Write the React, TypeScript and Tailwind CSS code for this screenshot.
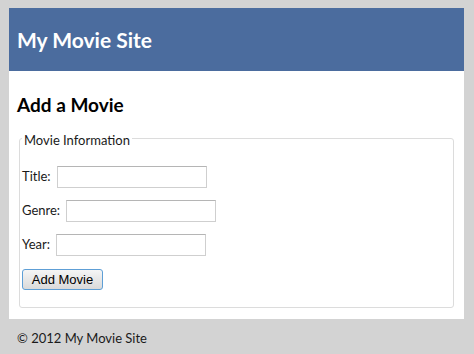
// App.tsx
// Simple "My Movie Site" page: blue header, add-movie form in a fieldset, gray footer

const font = { fontFamily: 'Lato, "DejaVu Sans", sans-serif' };

function Field({ label }: { label: string }) {
  return (
    <div className="flex items-center h-[22px]">
      <label className="text-[13px] text-[#1a1a1a] mr-[6px]">{label}</label>
      <input
        type="text"
        className="w-[150px] h-[22px] border border-[#cfcfcf] border-t-[#b5b5b5] bg-white outline-none"
      />
    </div>
  );
}

export default function App() {
  return (
    <div className="min-h-screen bg-[#d3d3d3] pt-2 pl-[9px] pr-[10px]" style={font}>
      {/* Header */}
      <header className="h-[63px] bg-[#4b6c9e] flex items-center px-2">
        <h1 className="text-[21px] font-bold text-white leading-none">My Movie Site</h1>
      </header>

      {/* Content */}
      <main className="bg-white h-[248px] px-2 pt-[22px]">
        <h2 className="text-[19px] font-bold text-black leading-[24px]">Add a Movie</h2>
        <fieldset className="mx-[2px] mt-[13px] h-[178px] border border-[#dcdcdc] rounded-[3px] px-[2px]">
          <legend className="relative top-[2px] text-[13px] text-[#1a1a1a] px-[2px] leading-[16px]">
            Movie Information
          </legend>
          <div className="flex flex-col gap-3 pt-[20px]">
            <Field label="Title:" />
            <Field label="Genre:" />
            <Field label="Year:" />
            <div className="-mt-[2px]">
              <button
                className="h-[21px] w-[81px] rounded-[3px] border border-[#5e9fd6] bg-gradient-to-b from-[#f5f5f5] to-[#dadada] text-[13px] text-black leading-none"
                style={{ fontFamily: '"Liberation Sans", Arial, sans-serif' }}
              >
                Add Movie
              </button>
            </div>
          </div>
        </fieldset>
      </main>

      {/* Footer */}
      <footer className="h-[35px] pt-[11px] px-2">
        <p className="text-[13px] leading-[16px] text-[#1a1a1a]">© 2012 My Movie Site</p>
      </footer>
    </div>
  );
}
